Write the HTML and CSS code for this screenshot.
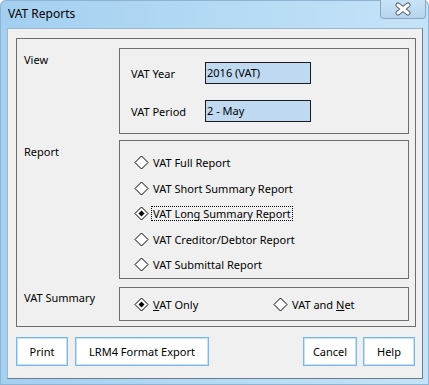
FILE: index.html
```html
<!DOCTYPE html>
<html>
<head>
<meta charset="utf-8">
<link rel="stylesheet" href="styles.css">
</head>
<body>
<div class="window">
  <div class="titlebar">
    <span class="title">VAT Reports</span>
    <div class="close">
      <svg width="18" height="14" viewBox="0 0 18 14">
        <path d="M4 3 L14 11 M14 3 L4 11" stroke="#5a6470" stroke-width="5" stroke-linecap="round"/>
        <path d="M4 3 L14 11 M14 3 L4 11" stroke="#ffffff" stroke-width="3" stroke-linecap="round"/>
      </svg>
    </div>
  </div>
  <div class="client">
    <div class="group">
      <div class="label l-view">View</div>
      <div class="box viewbox">
        <div class="field"><span class="flabel">VAT Year</span><span class="input">2016 (VAT)</span></div>
        <div class="field"><span class="flabel">VAT Period</span><span class="input">2 - May</span></div>
      </div>
      <div class="label l-report">Report</div>
      <div class="box reportbox">
        <div class="radio"><svg class="dia" width="15" height="15" viewBox="0 0 15 15"><polygon points="7.5,1 14,7.5 7.5,14 1,7.5" fill="#fff" stroke="#000" stroke-width="1"/></svg><span class="rtext">VAT Full Report</span></div>
        <div class="radio"><svg class="dia" width="15" height="15" viewBox="0 0 15 15"><polygon points="7.5,1 14,7.5 7.5,14 1,7.5" fill="#fff" stroke="#000" stroke-width="1"/></svg><span class="rtext">VAT Short Summary Report</span></div>
        <div class="radio"><svg class="dia" width="15" height="15" viewBox="0 0 15 15"><polygon points="7.5,1 14,7.5 7.5,14 1,7.5" fill="#fff" stroke="#000" stroke-width="1"/><polygon points="7.5,4.5 10.5,7.5 7.5,10.5 4.5,7.5" fill="#000"/></svg><span class="rtext focus">VAT Long Summary Report</span></div>
        <div class="radio"><svg class="dia" width="15" height="15" viewBox="0 0 15 15"><polygon points="7.5,1 14,7.5 7.5,14 1,7.5" fill="#fff" stroke="#000" stroke-width="1"/></svg><span class="rtext">VAT Creditor/Debtor Report</span></div>
        <div class="radio"><svg class="dia" width="15" height="15" viewBox="0 0 15 15"><polygon points="7.5,1 14,7.5 7.5,14 1,7.5" fill="#fff" stroke="#000" stroke-width="1"/></svg><span class="rtext">VAT Submittal Report</span></div>
      </div>
      <div class="label l-sum">VAT Summary</div>
      <div class="box sumbox">
        <div class="radio r1"><svg class="dia" width="15" height="15" viewBox="0 0 15 15"><polygon points="7.5,1 14,7.5 7.5,14 1,7.5" fill="#fff" stroke="#000" stroke-width="1"/><polygon points="7.5,4.5 10.5,7.5 7.5,10.5 4.5,7.5" fill="#000"/></svg><span class="rtext"><u>V</u>AT Only</span></div>
        <div class="radio r2"><svg class="dia" width="15" height="15" viewBox="0 0 15 15"><polygon points="7.5,1 14,7.5 7.5,14 1,7.5" fill="#fff" stroke="#000" stroke-width="1"/></svg><span class="rtext">VAT and <u>N</u>et</span></div>
      </div>
    </div>
    <div class="buttons">
      <div class="btn b-print">Print</div>
      <div class="btn b-export">LRM4 Format Export</div>
      <div class="spacer"></div>
      <div class="btn b-cancel">Cancel</div>
      <div class="btn b-help">Help</div>
    </div>
  </div>
</div>
</body>
</html>
```
FILE: styles.css
```css
html, body {
  margin: 0;
  padding: 0;
  background: #ffffff;
}
body {
  font-family: "Noto Sans", "Open Sans", sans-serif;
  font-size: 11px;
  color: #000;
}
.window {
  width: 429px;
  height: 385px;
  box-sizing: border-box;
  padding: 0 6px 6px 7px;
  background: linear-gradient(to right, #a3cff0 0%, #b4daf4 50%, #c4e3f8 100%);
  border-radius: 6px 6px 0 0;
  box-shadow: inset 0 0 0 1px #8eb3d3;
}
.titlebar {
  height: 28px;
  display: flex;
  align-items: flex-start;
  justify-content: space-between;
}
.title {
  font-size: 12px;
  margin-top: 6px;
  margin-left: 1px;
  line-height: 16px;
}
.close {
  width: 46px;
  height: 19px;
  margin-right: -3px;
  box-sizing: border-box;
  border: 1px solid #8aa5bd;
  border-top: none;
  border-radius: 0 0 4px 4px;
  background: linear-gradient(to bottom, #c9e3f6, #b5d6f0);
  display: flex;
  align-items: center;
  justify-content: center;
}
.client {
  width: 416px;
  height: 351px;
  box-sizing: border-box;
  border: 1px solid;
  border-color: #9db6cc #6e7c88 #6e7c88 #9db6cc;
  background: #f0f0f0;
  padding: 9px 6px 0 8px;
}
.group {
  width: 400px;
  height: 289px;
  box-sizing: border-box;
  border: 1px solid #6d6d6d;
  padding: 9px 6px 5px 7px;
  display: grid;
  grid-template-columns: 1fr 290px;
  grid-template-rows: auto auto auto;
  align-items: start;
}
.label {
  line-height: 16px;
}
.l-view { margin-top: 4px; }
.l-report { margin-top: 10px; }
.l-sum { margin-top: 11px; }
.box {
  box-sizing: border-box;
  border: 1px solid #6d6d6d;
}
.viewbox {
  height: 86px;
  padding: 13px 0 0 11px;
  display: flex;
  flex-direction: column;
  gap: 16px;
}
.field {
  display: flex;
  align-items: center;
  height: 22px;
}
.flabel {
  width: 74px;
}
.input {
  width: 106px;
  height: 22px;
  box-sizing: border-box;
  border: 1px solid #1c1c1c;
  background: #bfd9f1;
  padding-left: 1px;
  line-height: 20px;
}
.reportbox {
  margin-top: 6px;
  height: 139px;
  padding: 9px 0 0 14px;
}
.radio {
  display: flex;
  align-items: center;
  height: 25.5px;
}
.dia {
  flex: none;
  margin-right: 2px;
}
.rtext {
  line-height: 13px;
  padding: 0 1px;
  border: 1px solid transparent;
}
.rtext.focus {
  border: 1px dotted #000;
}
.sumbox {
  margin-top: 8px;
  height: 34px;
  display: flex;
  align-items: center;
  padding-left: 14px;
}
.sumbox .radio { height: 32px; }
.r1 { width: 139px; }
.buttons {
  margin-top: 10px;
  display: flex;
  width: 399px;
}
.spacer { flex: 1; }
.btn {
  height: 29px;
  box-sizing: border-box;
  border: 1px solid #79b6ea;
  box-shadow: inset 0 0 0 1px #c4e2fa;
  background: #ffffff;
  display: flex;
  align-items: center;
  justify-content: center;
}
.b-print { width: 52px; }
.b-export { width: 134px; margin-left: 7px; }
.b-cancel { width: 54px; }
.b-help { width: 52px; margin-left: 6px; }
```
